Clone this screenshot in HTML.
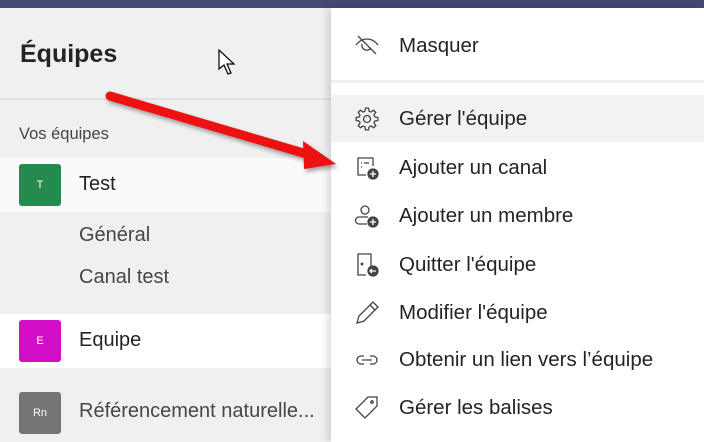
<!DOCTYPE html>
<html><head><meta charset="utf-8"><style>
*{margin:0;padding:0;box-sizing:border-box}
body{width:704px;height:442px;overflow:hidden;background:#f0f0f0;font-family:"Liberation Sans",sans-serif;position:relative}
.top{position:absolute;left:0;top:0;width:704px;height:8px;background:#464775}
.abs{position:absolute}
.h{left:20px;top:40px;font-size:25px;font-weight:bold;color:#252423}
.av{position:absolute;left:19px;width:42px;height:42px;border-radius:3px;color:#fff;font-size:11px;display:flex;align-items:center;justify-content:center}
.t{position:absolute;left:79px;font-size:20px;color:#252423}
.g{color:#484644}
.menu{position:absolute;left:331px;top:8px;width:373px;height:434px;background:#fff;box-shadow:-3px 0 8px rgba(0,0,0,.15)}
.it{position:absolute;left:0;width:373px;height:47px;display:flex;align-items:center;font-size:20.5px;color:#252423}
.it span{position:absolute;left:68px;top:12px}
.it svg{position:absolute;left:23px;top:11px}
</style></head><body>
<div class="top"></div>
<div class="abs h">Équipes</div>
<svg class="abs" style="left:218px;top:49px" width="20" height="28" viewBox="0 0 20 28"><path d="M1 1 L1 20 L6 16 L10 25 L13 24 L9 15 L16 15 Z" fill="#fff" stroke="#000" stroke-width="1.2"/></svg>
<div class="abs" style="left:0;top:98px;width:331px;height:2px;background:#e1dfdd"></div>
<div class="abs" style="left:19px;top:125px;font-size:16.5px;color:#484644">Vos équipes</div>
<div class="abs" style="left:0;top:158px;width:331px;height:54px;background:#fafafa"></div>
<div class="av" style="top:164px;background:#248a4e">T</div>
<div class="t" style="top:173px">Test</div>
<div class="t g" style="top:224px">Général</div>
<div class="t g" style="top:266px">Canal test</div>
<div class="abs" style="left:0;top:314px;width:331px;height:54px;background:#fff"></div>
<div class="av" style="top:320px;background:#d10ec4">E</div>
<div class="t" style="top:329px">Equipe</div>
<div class="av" style="top:392px;background:#757575">Rn</div>
<div class="t g" style="top:400px">Référencement naturelle...</div>
<div class="menu">
<div class="it" style="top:14px"><svg width="26" height="26" viewBox="0 0 26 26" fill="none" stroke="#444" stroke-width="1.3"><path d="M2 12c3-4 7-6 11-6s8 2 11 6M8 11a5 5 0 0 0 9 4M4 3l18 18"/></svg><span>Masquer</span></div>
<div class="abs" style="left:0;top:72px;width:373px;height:3px;background:#f0f0f0"></div>
<div class="it" style="top:87px;background:#f3f2f1"><svg width="26" height="26" viewBox="0 0 26 26" fill="none" stroke="#444" stroke-width="1.3" stroke-linejoin="round"><circle cx="13" cy="13" r="3.5"/><g transform="translate(13 13)"><polyline id="tt" points="7.73,-2.07 10.89,-1.53 10.89,1.53 7.73,2.07 6.93,4"/><use href="#tt" transform="rotate(45)"/><use href="#tt" transform="rotate(90)"/><use href="#tt" transform="rotate(135)"/><use href="#tt" transform="rotate(180)"/><use href="#tt" transform="rotate(225)"/><use href="#tt" transform="rotate(270)"/><use href="#tt" transform="rotate(315)"/></g></svg><span>Gérer l'équipe</span></div>
<div class="it" style="top:136px"><svg width="26" height="26" viewBox="0 0 26 26" fill="none" stroke="#444" stroke-width="1.3"><path d="M12 20H4V3h15v8M7 8h1M7 12h1M10 8h5"/><circle cx="19" cy="19" r="5" fill="#444"/><path d="M19 16v6M16 19h6" stroke="#fff"/></svg><span>Ajouter un canal</span></div>
<div class="it" style="top:184px"><svg width="26" height="26" viewBox="0 0 26 26" fill="none" stroke="#444" stroke-width="1.3"><circle cx="11" cy="7" r="4"/><path d="M13 21H5a3 3 0 0 1 0-7h9"/><circle cx="19" cy="19" r="5" fill="#444"/><path d="M19 16v6M16 19h6" stroke="#fff"/></svg><span>Ajouter un membre</span></div>
<div class="it" style="top:233px"><svg width="26" height="26" viewBox="0 0 26 26" fill="none" stroke="#444" stroke-width="1.3"><path d="M12 23H4V2h13v12"/><circle cx="8" cy="12" r=".8" fill="#444"/><circle cx="19" cy="19" r="5" fill="#444"/><path d="M22 19h-6M18 17l-2 2 2 2" stroke="#fff"/></svg><span>Quitter l'équipe</span></div>
<div class="it" style="top:281px"><svg width="26" height="26" viewBox="0 0 26 26" fill="none" stroke="#444" stroke-width="1.3"><path d="M3 23l2-7L19 2l5 5-14 14z M16 5l5 5"/></svg><span>Modifier l'équipe</span></div>
<div class="it" style="top:328px"><svg width="26" height="26" viewBox="0 0 26 26" fill="none" stroke="#444" stroke-width="1.3"><path d="M10 9H7a4 4 0 0 0 0 8h3M16 9h3a4 4 0 0 1 0 8h-3M8 13h10"/></svg><span>Obtenir un lien vers l’équipe</span></div>
<div class="it" style="top:376px"><svg width="26" height="26" viewBox="0 0 26 26" fill="none" stroke="#444" stroke-width="1.3"><path d="M14 2h9v9L11 23 2 14z"/><circle cx="18" cy="7" r="1.2"/></svg><span>Gérer les balises</span></div>
</div>
<svg class="abs" style="left:0;top:0" width="704" height="442"><g style="filter:drop-shadow(2px 3px 2px rgba(0,0,0,.35))"><line x1="110" y1="96" x2="310" y2="155" stroke="#ee1111" stroke-width="9" stroke-linecap="round"/><path d="M303 141 L336 164 L304 169 Z" fill="#ee1111"/></g></svg>
</body></html>
